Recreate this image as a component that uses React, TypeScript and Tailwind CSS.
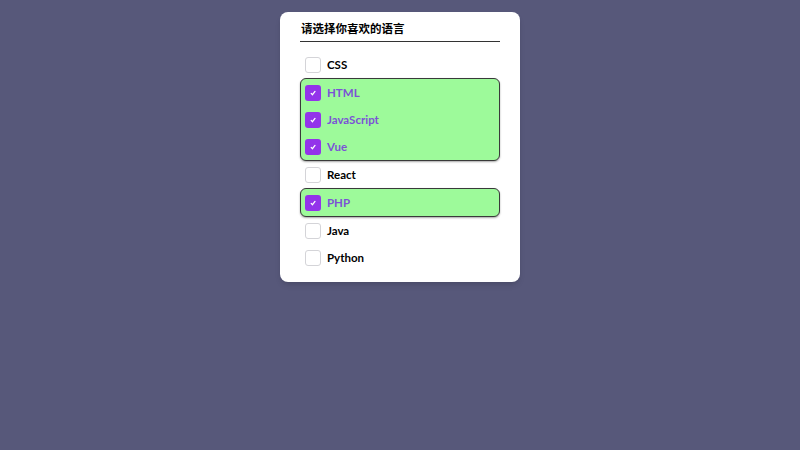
import React, { useState } from 'react';

const languages = ['CSS', 'HTML', 'JavaScript', 'Vue', 'React', 'PHP', 'Java', 'Python'];

const Check: React.FC = () => (
  <svg viewBox="0 0 16 16" className="h-[16px] w-[16px]" fill="none">
    <path d="M6.2 8.4l1.3 1.3 2.5-3.3" stroke="white" strokeWidth="1.3" strokeLinecap="round" strokeLinejoin="round" />
  </svg>
);

const App: React.FC = () => {
  const [selected, setSelected] = useState<string[]>(['HTML', 'JavaScript', 'Vue', 'PHP']);

  const toggle = (lang: string) => {
    setSelected((prev) => (prev.includes(lang) ? prev.filter((l) => l !== lang) : [...prev, lang]));
  };

  // group consecutive checked items into one green block
  const groups: { checked: boolean; items: string[] }[] = [];
  languages.forEach((lang) => {
    const checked = selected.includes(lang);
    const last = groups[groups.length - 1];
    if (last && last.checked && checked) last.items.push(lang);
    else groups.push({ checked, items: [lang] });
  });

  return (
    <div
      className="min-h-screen w-full bg-[#57587a] pt-[12px]"
      style={{ fontFamily: '"Noto Sans", "Noto Sans CJK SC", sans-serif' }}
    >
      <div className="mx-auto w-[240px] rounded-[8px] bg-white px-[20px] pb-[11px] shadow-md">
        {/* Header */}
        <div className="border-b border-[#333] pt-[8px] pb-[3px]">
          <h1 className="pl-[1px] text-[11.5px] font-bold leading-[18px] text-black">请选择你喜欢的语言</h1>
        </div>

        {/* Options */}
        <div className="mt-[9px] flex flex-col">
          {groups.map((group, gi) => (
            <div
              key={gi}
              className={
                group.checked
                  ? 'rounded-[6px] border border-[#3a3a3a] bg-[#9dfa9a] shadow-[0_1px_2px_rgba(0,0,0,0.35)]'
                  : ''
              }
            >
              {group.items.map((lang) => {
                const checked = selected.includes(lang);
                return (
                  <label
                    key={lang}
                    onClick={() => toggle(lang)}
                    className={`flex h-[27px] cursor-pointer items-center gap-[6px] ${checked ? 'pl-[4px]' : 'pl-[5px]'}`}
                  >
                    <span
                      className={
                        checked
                          ? 'flex h-[16px] w-[16px] items-center justify-center rounded-[3px] bg-[#9333ea]'
                          : 'h-[16px] w-[16px] rounded-[3px] border border-[#d4d4d8] bg-white'
                      }
                    >
                      {checked && <Check />}
                    </span>
                    <span
                      className={`text-[11.5px] font-bold ${checked ? 'text-[#7b52d6]' : 'text-black'}`}
                      style={{ fontFamily: 'Lato, "Noto Sans", sans-serif' }}
                    >
                      {lang}
                    </span>
                  </label>
                );
              })}
            </div>
          ))}
        </div>
      </div>
    </div>
  );
};

export default App;
